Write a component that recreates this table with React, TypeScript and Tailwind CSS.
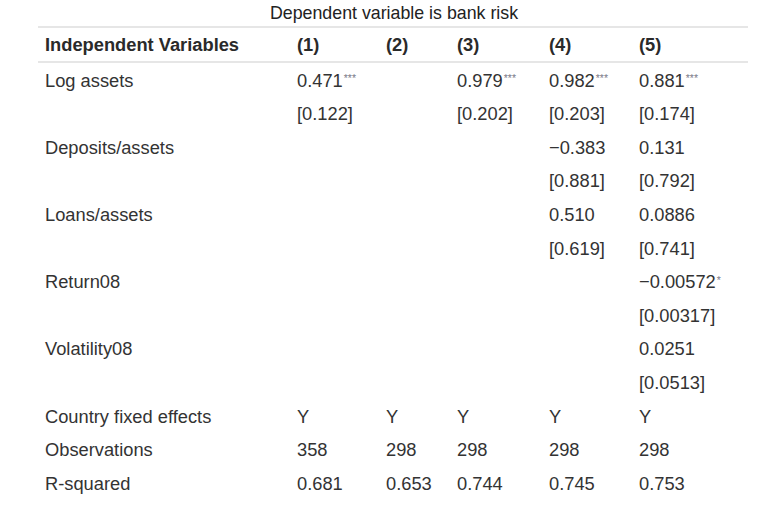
const rows: { label: string; cells: (string | [string, string])[] }[] = [
  { label: "Log assets", cells: [["0.471", "***"], "", ["0.979", "***"], ["0.982", "***"], ["0.881", "***"]] },
  { label: "", cells: ["[0.122]", "", "[0.202]", "[0.203]", "[0.174]"] },
  { label: "Deposits/assets", cells: ["", "", "", "\u22120.383", "0.131"] },
  { label: "", cells: ["", "", "", "[0.881]", "[0.792]"] },
  { label: "Loans/assets", cells: ["", "", "", "0.510", "0.0886"] },
  { label: "", cells: ["", "", "", "[0.619]", "[0.741]"] },
  { label: "Return08", cells: ["", "", "", "", ["\u22120.00572", "*"]] },
  { label: "", cells: ["", "", "", "", "[0.00317]"] },
  { label: "Volatility08", cells: ["", "", "", "", "0.0251"] },
  { label: "", cells: ["", "", "", "", "[0.0513]"] },
  { label: "Country fixed effects", cells: ["Y", "Y", "Y", "Y", "Y"] },
  { label: "Observations", cells: ["358", "298", "298", "298", "298"] },
  { label: "R-squared", cells: ["0.681", "0.653", "0.744", "0.745", "0.753"] },
];

const cols = "grid grid-cols-[252px_89px_71px_92px_90px_116px]";

function Cell({ v }: { v: string | [string, string] }) {
  if (Array.isArray(v)) {
    return (
      <div className="flex items-center pl-[7px] pt-[1px]">
        {v[0]}
        <span className="relative -top-[1px] ml-[1px] text-[10.5px] text-[#7c7c8a]">{v[1]}</span>
      </div>
    );
  }
  return <div className="flex items-center pl-[7px] pt-[1px]">{v}</div>;
}

export default function App() {
  return (
    <div className="h-[519px] w-[764px] bg-white font-['Liberation_Sans',Arial,sans-serif] text-[18.3px] text-[#333333]">
      <div className="ml-[38px] w-[710px]">
        <div className="flex h-[26px] items-center justify-center pl-[2px] pt-[1px] text-[17.8px] text-[#222]">
          Dependent variable is bank risk
        </div>
        <div className={`${cols} h-[37px] border-y-2 border-[#e6e6e6] font-bold text-[#2a2a2a]`}>
          <div className="flex items-center pl-[7px] pt-[1px]">Independent Variables</div>
          <div className="flex items-center pl-[7px] pt-[1px]">(1)</div>
          <div className="flex items-center pl-[7px] pt-[1px]">(2)</div>
          <div className="flex items-center pl-[7px] pt-[1px]">(3)</div>
          <div className="flex items-center pl-[7px] pt-[1px]">(4)</div>
          <div className="flex items-center pl-[7px] pt-[1px]">(5)</div>
        </div>
        {rows.map((r, i) => (
          <div key={i} className={`${cols} h-[33.6px]`}>
            <div className="flex items-center pl-[7px] pt-[1px]">{r.label}</div>
            {r.cells.map((c, j) => (
              <Cell key={j} v={c} />
            ))}
          </div>
        ))}
      </div>
    </div>
  );
}
